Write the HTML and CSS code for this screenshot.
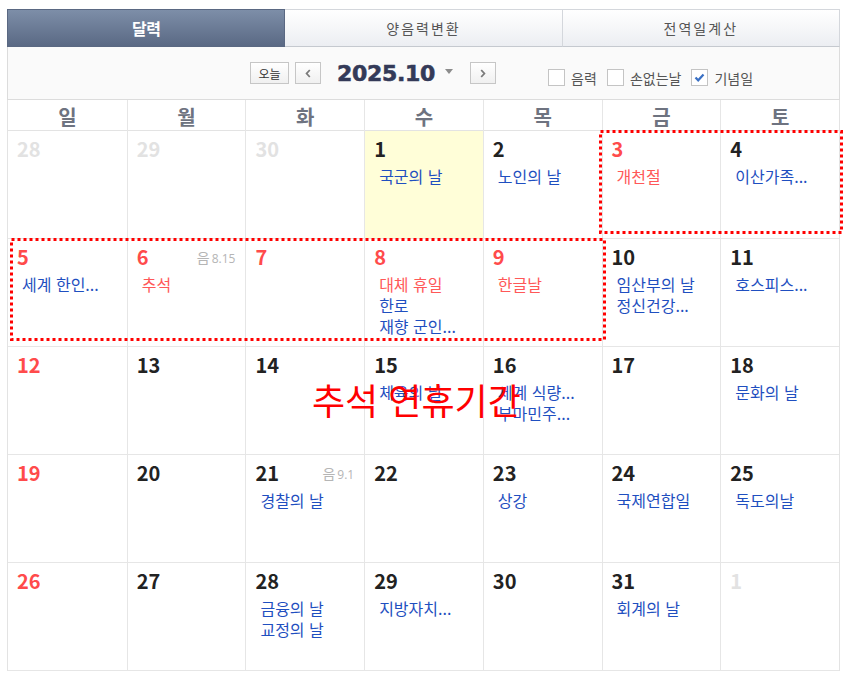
FILE: index.html
```html
<!DOCTYPE html>
<html lang="ko">
<head>
<meta charset="utf-8">
<title>달력</title>
<link rel="stylesheet" href="styles.css">
</head>
<body>
<div class="cal">
  <div class="tabs">
    <div class="tab active">달력</div>
    <div class="tab">양음력변환</div>
    <div class="tab">전역일계산</div>
  </div>
  <div class="toolbar">
    <div class="btn today">오늘</div>
    <div class="btn arrow"><svg width="6" height="9" viewBox="0 0 6 9"><path d="M4.8 1 L1.6 4.5 L4.8 8" fill="none" stroke="#7a7a7a" stroke-width="1.8"/></svg></div>
    <div class="title">2025.10</div>
    <div class="caret"></div>
    <div class="btn arrow next"><svg width="6" height="9" viewBox="0 0 6 9"><path d="M1.2 1 L4.4 4.5 L1.2 8" fill="none" stroke="#7a7a7a" stroke-width="1.8"/></svg></div>
    <div class="opts">
      <div class="opt"><span class="cb"></span>음력</div>
      <div class="opt"><span class="cb"></span>손없는날</div>
      <div class="opt"><span class="cb"><svg width="15" height="15" viewBox="0 0 15 15"><path d="M3.5 7.5 L6.2 10.3 L11.5 4.5" fill="none" stroke="#3a70c4" stroke-width="2.2"/></svg></span>기념일</div>
    </div>
  </div>
  <div class="head">
    <div>일</div><div>월</div><div>화</div><div>수</div><div>목</div><div>금</div><div>토</div>
  </div>
  <div class="grid">
    <div class="cell"><div class="top"><span class="num dim">28</span></div></div>
    <div class="cell"><div class="top"><span class="num dim">29</span></div></div>
    <div class="cell"><div class="top"><span class="num dim">30</span></div></div>
    <div class="cell todaycell"><div class="top"><span class="num">1</span></div><div class="evs"><div>국군의 날</div></div></div>
    <div class="cell"><div class="top"><span class="num">2</span></div><div class="evs"><div>노인의 날</div></div></div>
    <div class="cell"><div class="top"><span class="num red">3</span></div><div class="evs"><div class="hol">개천절</div></div></div>
    <div class="cell"><div class="top"><span class="num">4</span></div><div class="evs"><div>이산가족...</div></div></div>

    <div class="cell"><div class="top"><span class="num red">5</span></div><div class="evs"><div>세계 한인...</div></div></div>
    <div class="cell"><div class="top"><span class="num red">6</span><span class="lunar">음<small>8.15</small></span></div><div class="evs"><div class="hol">추석</div></div></div>
    <div class="cell"><div class="top"><span class="num red">7</span></div></div>
    <div class="cell"><div class="top"><span class="num red">8</span></div><div class="evs"><div class="hol">대체 휴일</div><div>한로</div><div>재향 군인...</div></div></div>
    <div class="cell"><div class="top"><span class="num red">9</span></div><div class="evs"><div class="hol">한글날</div></div></div>
    <div class="cell"><div class="top"><span class="num">10</span></div><div class="evs"><div>임산부의 날</div><div>정신건강...</div></div></div>
    <div class="cell"><div class="top"><span class="num">11</span></div><div class="evs"><div>호스피스...</div></div></div>

    <div class="cell"><div class="top"><span class="num red">12</span></div></div>
    <div class="cell"><div class="top"><span class="num">13</span></div></div>
    <div class="cell"><div class="top"><span class="num">14</span></div></div>
    <div class="cell"><div class="top"><span class="num">15</span></div><div class="evs"><div>체육의 날</div></div></div>
    <div class="cell"><div class="top"><span class="num">16</span></div><div class="evs"><div>세계 식량...</div><div>부마민주...</div></div></div>
    <div class="cell"><div class="top"><span class="num">17</span></div></div>
    <div class="cell"><div class="top"><span class="num">18</span></div><div class="evs"><div>문화의 날</div></div></div>

    <div class="cell"><div class="top"><span class="num red">19</span></div></div>
    <div class="cell"><div class="top"><span class="num">20</span></div></div>
    <div class="cell"><div class="top"><span class="num">21</span><span class="lunar">음<small>9.1</small></span></div><div class="evs"><div>경찰의 날</div></div></div>
    <div class="cell"><div class="top"><span class="num">22</span></div></div>
    <div class="cell"><div class="top"><span class="num">23</span></div><div class="evs"><div>상강</div></div></div>
    <div class="cell"><div class="top"><span class="num">24</span></div><div class="evs"><div>국제연합일</div></div></div>
    <div class="cell"><div class="top"><span class="num">25</span></div><div class="evs"><div>독도의날</div></div></div>

    <div class="cell"><div class="top"><span class="num red">26</span></div></div>
    <div class="cell"><div class="top"><span class="num">27</span></div></div>
    <div class="cell"><div class="top"><span class="num">28</span></div><div class="evs"><div>금융의 날</div><div>교정의 날</div></div></div>
    <div class="cell"><div class="top"><span class="num">29</span></div><div class="evs"><div>지방자치...</div></div></div>
    <div class="cell"><div class="top"><span class="num">30</span></div></div>
    <div class="cell"><div class="top"><span class="num">31</span></div><div class="evs"><div>회계의 날</div></div></div>
    <div class="cell"><div class="top"><span class="num dim">1</span></div></div>
  </div>

  <svg class="mark mark1" width="244" height="104" viewBox="0 0 244 104"><rect x="1.5" y="1.5" width="241" height="101" fill="none" stroke="#ff0000" stroke-width="3" stroke-dasharray="3 3"/></svg>
  <svg class="mark mark2" width="596" height="103" viewBox="0 0 596 103"><rect x="1.5" y="1.5" width="593" height="100" fill="none" stroke="#ff0000" stroke-width="3" stroke-dasharray="3 3"/></svg>
  <div class="note">추석 연휴기간</div>
</div>
</body>
</html>
```

FILE: styles.css
```css
body {
  margin: 0;
  background: #fff;
  font-family: "Noto Sans CJK KR", "Noto Sans", sans-serif;
}

.cal {
  position: relative;
  width: 833px;
  margin: 9px 0 0 7px;
}

/* tabs */
.tabs {
  display: flex;
  height: 38px;
}
.tab {
  flex: 1;
  display: flex;
  align-items: center;
  justify-content: center;
  box-sizing: border-box;
  border: 1px solid #d4d7dc;
  border-left: none;
  border-bottom-color: #c5c9cf;
  background: linear-gradient(#ffffff, #eceef2);
  color: #555;
  font-size: 14px;
  letter-spacing: 2px;
}
.tab.active {
  border: 1px solid #5a6882;
  background: linear-gradient(#7d8ea8, #5a6984);
  color: #fff;
  font-weight: bold;
  font-size: 16px;
  letter-spacing: -0.5px;
}

/* toolbar */
.toolbar {
  height: 53px;
  box-sizing: border-box;
  border: 1px solid #dcdcdc;
  border-top: none;
  background: #fafafa;
  display: flex;
  align-items: center;
  padding-left: 242px;
}
.btn {
  height: 22px;
  box-sizing: border-box;
  border: 1px solid #c6c6c6;
  background: linear-gradient(#ffffff, #f0f0f0);
  display: flex;
  align-items: center;
  justify-content: center;
}
.btn.today {
  width: 39px;
  font-size: 12px;
  color: #333;
}
.btn.arrow {
  width: 26px;
  margin-left: 6px;
}
.btn.arrow.next {
  margin-left: 17px;
}
.title {
  margin-left: 16px;
  font-family: "DejaVu Sans", "Liberation Sans", sans-serif;
  font-weight: bold;
  font-size: 22px;
  color: #343a58;
  letter-spacing: -0.3px;
  -webkit-text-stroke: 0.6px #343a58;
}
.caret {
  width: 0;
  height: 0;
  margin-left: 10px;
  margin-top: -3px;
  border-left: 4px solid transparent;
  border-right: 4px solid transparent;
  border-top: 5px solid #8c8c8c;
}
.opts {
  display: flex;
  align-items: center;
  margin-left: 52px;
  margin-top: 9px;
  font-size: 14px;
  color: #555;
}
.opt {
  display: flex;
  align-items: center;
}
.opt + .opt {
  margin-left: 10px;
}
.cb {
  width: 17px;
  height: 17px;
  box-sizing: border-box;
  border: 1px solid #c4c4c4;
  background: #fff;
  margin-right: 6px;
  display: flex;
  align-items: center;
  justify-content: center;
}

/* header */
.head {
  display: grid;
  grid-template-columns: repeat(7, 1fr);
  height: 31px;
  box-sizing: border-box;
  border: 1px solid #e3e3e3;
  border-top: none;
}
.head div {
  display: flex;
  align-items: center;
  justify-content: center;
  padding-top: 2px;
  font-size: 20px;
  font-weight: bold;
  color: #6e7380;
  border-left: 1px solid #e6e6e6;
}
.head div:first-child {
  border-left: none;
}

/* grid */
.grid {
  display: grid;
  grid-template-columns: repeat(7, 1fr);
  grid-auto-rows: 108px;
  border-left: 1px solid #e3e3e3;
  border-right: 1px solid #e3e3e3;
}
.cell {
  min-width: 0;
  overflow: hidden;
  box-sizing: border-box;
  border-left: 1px solid #e6e6e6;
  border-bottom: 1px solid #e6e6e6;
  padding: 5px 10px 0 9px;
  white-space: nowrap;
}
.cell:nth-child(7n+1) {
  border-left: none;
}
.todaycell {
  background: #fffed8;
}
.top {
  display: flex;
  align-items: center;
  justify-content: space-between;
  height: 26px;
}
.num {
  font-size: 20px;
  line-height: 26px;
  font-weight: bold;
  color: #222;
}
.num.red {
  color: #ff4b4b;
}
.num.dim {
  color: #e2e2e2;
}
.lunar {
  color: #b5b5b5;
  font-size: 14px;
}
.lunar small {
  font-family: "Open Sans", "Noto Sans", sans-serif;
  font-size: 12px;
  margin-left: 2px;
}
.evs {
  margin-top: 4px;
  padding-left: 5px;
  font-size: 16px;
  line-height: 21px;
  color: #1f4fc0;
}
.evs .hol {
  color: #ff5858;
}

/* overlays */
.mark {
  position: absolute;
  display: block;
}
.mark1 {
  left: 592px;
  top: 121px;
}
.mark2 {
  left: 3px;
  top: 229px;
}
.note {
  position: absolute;
  left: 305px;
  top: 372px;
  font-size: 36px;
  line-height: 36px;
  color: #ff0000;
  white-space: nowrap;
}
```
